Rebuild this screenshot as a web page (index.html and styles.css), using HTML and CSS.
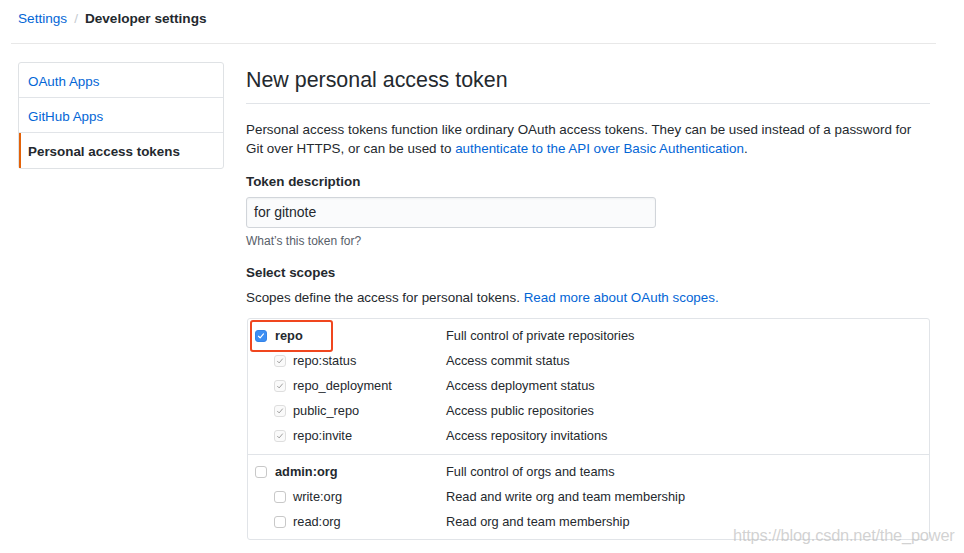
FILE: index.html
```html
<!DOCTYPE html>
<html>
<head>
<meta charset="utf-8">
<link rel="stylesheet" href="styles.css">
</head>
<body>
<div class="page">
  <header class="crumbs">
    <a class="link" href="#">Settings</a><span class="sep">/</span><strong>Developer settings</strong>
  </header>
  <div class="layout">
    <nav class="menu">
      <a class="menu-item" href="#">OAuth Apps</a>
      <a class="menu-item" href="#">GitHub Apps</a>
      <a class="menu-item selected" href="#">Personal access tokens</a>
    </nav>
    <main class="main">
      <h2 class="title">New personal access token</h2>
      <p class="intro">Personal access tokens function like ordinary OAuth access tokens. They can be used instead of a password for Git over HTTPS, or can be used to <a class="link" href="#">authenticate to the API over Basic Authentication</a>.</p>
      <label class="label">Token description</label>
      <div class="input">for gitnote</div>
      <p class="note">What’s this token for?</p>
      <label class="label scopes-label">Select scopes</label>
      <p class="scopes-desc">Scopes define the access for personal tokens. <a class="link" href="#">Read more about OAuth scopes.</a></p>
      <div class="scopes">
        <div class="group">
          <div class="row parent highlighted">
            <span class="name"><span class="cb checked"><svg viewBox="0 0 12 12"><path d="M3 6.3l2 2 4-4.8" fill="none" stroke="#fff" stroke-width="1.4" stroke-linecap="round" stroke-linejoin="round"/></svg></span><b>repo</b></span>
            <span class="desc">Full control of private repositories</span>
          </div>
          <div class="row child"><span class="name"><span class="cb dim"><svg viewBox="0 0 12 12"><path d="M3 6.3l2 2 4-4.8" fill="none" stroke="#a0a0a0" stroke-width="1.2" stroke-linecap="round" stroke-linejoin="round"/></svg></span>repo:status</span><span class="desc">Access commit status</span></div>
          <div class="row child"><span class="name"><span class="cb dim"><svg viewBox="0 0 12 12"><path d="M3 6.3l2 2 4-4.8" fill="none" stroke="#a0a0a0" stroke-width="1.2" stroke-linecap="round" stroke-linejoin="round"/></svg></span>repo_deployment</span><span class="desc">Access deployment status</span></div>
          <div class="row child"><span class="name"><span class="cb dim"><svg viewBox="0 0 12 12"><path d="M3 6.3l2 2 4-4.8" fill="none" stroke="#a0a0a0" stroke-width="1.2" stroke-linecap="round" stroke-linejoin="round"/></svg></span>public_repo</span><span class="desc">Access public repositories</span></div>
          <div class="row child"><span class="name"><span class="cb dim"><svg viewBox="0 0 12 12"><path d="M3 6.3l2 2 4-4.8" fill="none" stroke="#a0a0a0" stroke-width="1.2" stroke-linecap="round" stroke-linejoin="round"/></svg></span>repo:invite</span><span class="desc">Access repository invitations</span></div>
        </div>
        <div class="group">
          <div class="row parent"><span class="name"><span class="cb"></span><b>admin:org</b></span><span class="desc">Full control of orgs and teams</span></div>
          <div class="row child"><span class="name"><span class="cb"></span>write:org</span><span class="desc">Read and write org and team membership</span></div>
          <div class="row child"><span class="name"><span class="cb"></span>read:org</span><span class="desc">Read org and team membership</span></div>
        </div>
      </div>
    </main>
  </div>
</div>
<div class="watermark">https://blog.csdn.net/the_power</div>
</body>
</html>
```

FILE: styles.css
```css
* { box-sizing: border-box; }
html, body { margin: 0; padding: 0; background: #fff; }
body {
  font-family: "Liberation Sans", Arial, sans-serif;
  font-size: 13.4px;
  color: #24292e;
  width: 964px;
  height: 553px;
  overflow: hidden;
  position: relative;
}
.link { color: #0366d6; text-decoration: none; }
.page { padding: 0 28px 0 11px; }
.crumbs {
  height: 44px;
  padding: 10px 0 0 7px;
  font-size: 13.6px;
  line-height: 18px;
  border-bottom: 1px solid #e8e8e8;
}
.crumbs .sep { color: #c6cbd1; margin: 0 7px 0 7px; }
.crumbs strong { font-weight: bold; color: #24292e; }
.layout { display: flex; padding-top: 18px; }
.menu {
  width: 206px;
  margin-left: 7px;
  margin-right: 22px;
  align-self: flex-start;
  border: 1px solid #dfe2e5;
  border-radius: 3px;
  display: flex;
  flex-direction: column;
}
.menu-item {
  display: block;
  height: 35px;
  padding: 11px 0 0 9px;
  line-height: 16px;
  color: #0366d6;
  text-decoration: none;
  border-bottom: 1px solid #e1e4e8;
}
.menu-item.selected {
  border-bottom: 0;
  color: #24292e;
  font-weight: bold;
  border-left: 2px solid #e36209;
  padding-left: 7px;
}
.main { width: 684px; }
.title {
  margin: 4px 0 0;
  font-size: 21.4px;
  font-weight: normal;
  line-height: 28px;
  padding-bottom: 9px;
  border-bottom: 1px solid #e1e4e8;
}
.intro { margin: 16px 0 0; line-height: 19px; }
.label { display: block; font-weight: bold; margin-top: 15px; line-height: 18px; }
.input {
  margin-top: 6px;
  width: 410px;
  height: 31px;
  padding: 6px 7px;
  line-height: 17px;
  font-size: 14px;
  background: #fafbfc;
  border: 1px solid #d1d5da;
  border-radius: 3px;
  box-shadow: inset 0 1px 2px rgba(27,31,35,0.05);
}
.note { margin: 6px 0 0; font-size: 12px; color: #586069; line-height: 14px; }
.scopes-label { margin-top: 16px; }
.scopes-desc { margin: 7px 0 0; line-height: 18px; }
.scopes {
  margin-top: 11px;
  margin-left: 1px;
  border: 1px solid #e1e4e8;
  border-radius: 3px;
  font-size: 12.8px;
}
.group { padding: 4px 0 6px; border-bottom: 1px solid #e1e4e8; }
.group:last-child { padding-bottom: 5px; border-bottom: 0; }
.row { display: flex; align-items: center; height: 25px; }
.row .name { display: flex; align-items: center; width: 198px; }
.row.parent .name { padding-left: 7px; }
.row.child .name { padding-left: 26px; }
.row .desc { color: #24292e; }
.highlighted { position: relative; }
.highlighted::after {
  content: "";
  position: absolute;
  left: 2px;
  top: -3px;
  width: 79px;
  height: 28px;
  border: 2px solid #f0461e;
  border-radius: 3px;
}
.cb {
  width: 12px;
  height: 12px;
  border: 1px solid #c8c8c8;
  border-radius: 3px;
  background: #fff;
  display: inline-flex;
  align-items: center;
  justify-content: center;
}
.cb svg { width: 12px; height: 12px; display: block; }
.cb.checked { background: #3c8ef3; border-color: #3583e8; }
.cb.dim { border-color: #dedede; background: #fafafa; }
.row.child .cb { margin-right: 7px; }
.row.parent .cb { margin-right: 8px; }
.watermark {
  position: absolute;
  left: 733px;
  top: 525px;
  font-size: 16.4px;
  line-height: 20px;
  color: rgba(190,190,190,0.7);
  letter-spacing: -0.2px;
}
```
